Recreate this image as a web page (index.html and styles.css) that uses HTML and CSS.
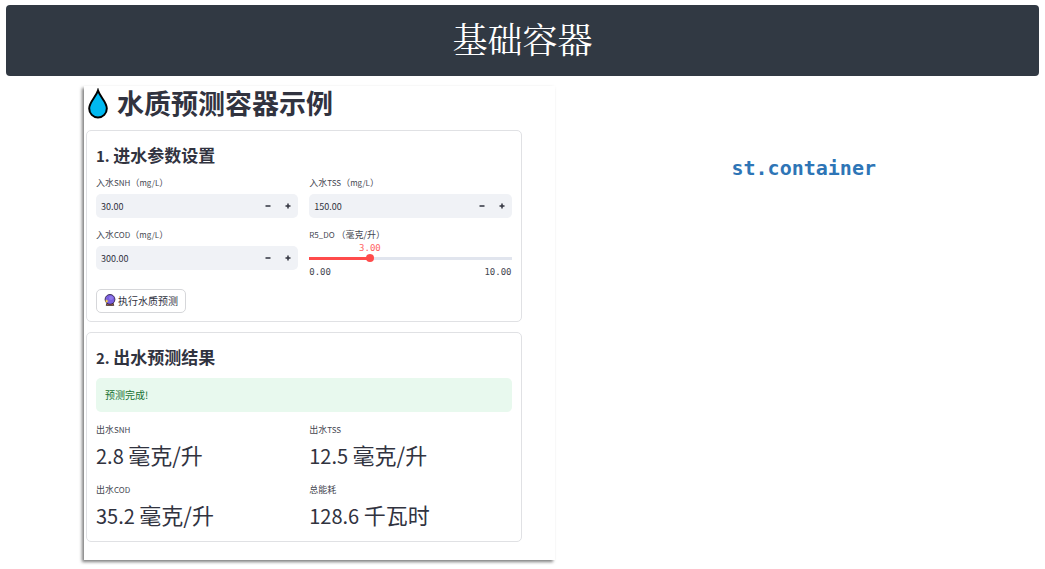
FILE: index.html
```html
<!DOCTYPE html>
<html lang="zh-CN">
<head>
<meta charset="utf-8">
<meta name="viewport" content="width=device-width, initial-scale=1">
<title>基础容器</title>
<link rel="stylesheet" href="styles.css">
</head>
<body>
<header class="banner"><h1 class="banner-title">基础容器</h1></header>
<main class="content">
  <section class="sheet">
    <h2 class="app-title">
      <svg class="drop" viewBox="0 0 20 30" aria-hidden="true"><path d="M10 1.500C8 8 1.200 13 1.200 19.500a8.800 9 0 0 0 17.600 0C18.800 13 12 8 10 1.500Z" fill="#00b9f1" stroke="#000" stroke-width="2"/></svg>
      <span>水质预测容器示例</span>
    </h2>

    <form class="card">
      <h3 class="card-title"><span class="card-index">1. </span>进水参数设置</h3>
      <div class="fields">
        <div class="field">
          <label class="label" for="snh">入水<span class="latin">SNH</span>（<span class="latin">mg/L</span>）</label>
          <div class="stepper">
            <input class="number" id="snh" type="number" step="0.01" value="30.00">
            <button class="step" type="button" aria-label="减少"><svg class="step-icon" viewBox="0 0 8 8"><path d="M1.500 4h5"/></svg></button>
            <button class="step" type="button" aria-label="增加"><svg class="step-icon" viewBox="0 0 8 8"><path d="M1.500 4h5M4 1.500v5"/></svg></button>
          </div>
        </div>
        <div class="field">
          <label class="label" for="tss">入水<span class="latin">TSS</span>（<span class="latin">mg/L</span>）</label>
          <div class="stepper">
            <input class="number" id="tss" type="number" step="0.01" value="150.00">
            <button class="step" type="button" aria-label="减少"><svg class="step-icon" viewBox="0 0 8 8"><path d="M1.500 4h5"/></svg></button>
            <button class="step" type="button" aria-label="增加"><svg class="step-icon" viewBox="0 0 8 8"><path d="M1.500 4h5M4 1.500v5"/></svg></button>
          </div>
        </div>
        <div class="field">
          <label class="label" for="cod">入水<span class="latin">COD</span>（<span class="latin">mg/L</span>）</label>
          <div class="stepper">
            <input class="number" id="cod" type="number" step="0.01" value="300.00">
            <button class="step" type="button" aria-label="减少"><svg class="step-icon" viewBox="0 0 8 8"><path d="M1.500 4h5"/></svg></button>
            <button class="step" type="button" aria-label="增加"><svg class="step-icon" viewBox="0 0 8 8"><path d="M1.500 4h5M4 1.500v5"/></svg></button>
          </div>
        </div>
        <div class="field slider">
          <label class="label" for="do"><span class="latin">R5_DO </span>（毫克/升）</label>
          <output class="slider-value" for="do">3.00</output>
          <input class="range" id="do" type="range" min="0" max="10" step="0.01" value="3">
          <div class="slider-ends"><span>0.00</span><span>10.00</span></div>
        </div>
      </div>
      <button class="run" type="button">
        <svg class="ball" viewBox="0 0 12 12" aria-hidden="true"><path d="M3 8.800h6l.8 2.600H2.200Z" fill="#a8643c" stroke="#3a2a2e" stroke-width=".8"/><circle cx="6" cy="5.400" r="4.900" fill="#7b5fe0" stroke="#33264d" stroke-width=".9"/><circle cx="7" cy="4" r="2" fill="#8f7bea"/><path d="M2.700 5.200l.6 1.300 1.300.6-1.300.6-.6 1.300-.6-1.300L.8 7.100l1.300-.6Z" fill="#ffd83d"/></svg>
        <span>执行水质预测</span>
      </button>
    </form>

    <section class="card">
      <h3 class="card-title"><span class="card-index">2. </span>出水预测结果</h3>
      <p class="alert" role="status">预测完成!</p>
      <dl class="metrics">
        <div class="metric"><dt class="label">出水<span class="latin">SNH</span></dt><dd class="value"><span class="figure">2.8 </span>毫克/升</dd></div>
        <div class="metric"><dt class="label">出水<span class="latin">TSS</span></dt><dd class="value"><span class="figure">12.5 </span>毫克/升</dd></div>
        <div class="metric"><dt class="label">出水<span class="latin">COD</span></dt><dd class="value"><span class="figure">35.2 </span>毫克/升</dd></div>
        <div class="metric"><dt class="label">总能耗</dt><dd class="value"><span class="figure">128.6 </span>千瓦时</dd></div>
      </dl>
    </section>
  </section>
  <aside class="note"><code class="api">st.container</code></aside>
</main>
</body>
</html>
```
FILE: styles.css
```css
* { box-sizing: border-box; }

body {
  margin: 0;
  padding: 5px 6px;
  background: #fff;
  color: #31333f;
  font-family: "Noto Sans CJK SC", sans-serif;
}

h1, h2, h3, p, dl, dd { margin: 0; }

button, input { font: inherit; color: inherit; }

.banner {
  padding: 10px 12px 14px;
  border-radius: 4px;
  background: #313943;
  text-align: center;
}

.banner-title {
  color: #fff;
  font-family: KaiTi, STKaiti, "Noto Serif CJK SC", "Noto Sans CJK SC", serif;
  font-size: 35px;
  font-weight: 400;
  line-height: 47px;
}

.content {
  display: grid;
  grid-template-columns: 1fr 1fr;
  align-items: start;
  gap: 14px;
  padding: 10px 0 0 78px;
}

.sheet {
  display: flex;
  flex-direction: column;
  gap: 10px;
  padding: 0 33px 18px 2px;
  background: #fff;
  box-shadow: -2px 2px 3px rgba(0, 0, 0, 0.5);
}

.app-title {
  display: flex;
  align-items: center;
  gap: 9px;
  padding-left: 2px;
  font-size: 27px;
  font-weight: 700;
  line-height: 34px;
}

.drop { width: 20px; height: 32px; }

.app-title { padding-top: 2px; }

.app-title span { margin-top: -2px; }

.card {
  padding: 9px 9px 8px;
  border: 1px solid #e0e1e4;
  border-radius: 5px;
}

.card-title {
  margin-bottom: 5px;
  font-size: 17px;
  font-weight: 700;
  line-height: 30px;
}

.card-index, .latin, .figure { line-height: 1; }

.card-index { font-size: 15px; }

.fields, .metrics {
  display: grid;
  grid-template-columns: 1fr 1fr;
  gap: 9px 11px;
}

.label {
  display: block;
  color: #444650;
  font-size: 9px;
  line-height: 16px;
}

.latin { font-size: 8px; }

.stepper {
  display: flex;
  height: 24px;
  margin-top: 3px;
  border-radius: 5px;
  background: #f0f2f6;
}

.number {
  flex: 1;
  min-width: 0;
  padding: 0 5px;
  border: 0;
  background: none;
  font-size: 9px;
  appearance: textfield;
}

.number::-webkit-inner-spin-button { display: none; }

.step {
  display: grid;
  place-items: center;
  width: 20px;
  padding: 0;
  border: 0;
  background: none;
}

.step-icon {
  width: 8px;
  height: 8px;
  fill: none;
  stroke: #31333f;
  stroke-width: 1.5;
}

.slider {
  display: flex;
  flex-direction: column;
}

.slider-value, .slider-ends {
  font-family: "DejaVu Sans Mono", monospace;
  font-size: 9px;
}

.slider-value {
  width: 60%;
  color: #ff6464;
  line-height: 10px;
  text-align: center;
}

.range {
  height: 10px;
  margin: 0 -4px;
  appearance: none;
  background: none;
}

.range::-webkit-slider-runnable-track {
  height: 3px;
  background: linear-gradient(to right, #ff4b4b 30%, #e1e5ee 30%) center / calc(100% - 8px) 100% no-repeat;
}

.range::-webkit-slider-thumb {
  width: 8px;
  height: 8px;
  margin-top: -3px;
  border-radius: 50%;
  appearance: none;
  background: #ff4b4b;
}

.slider-ends {
  display: flex;
  justify-content: space-between;
  margin-top: 3px;
  color: #444650;
  line-height: 12px;
}

.run {
  display: flex;
  align-items: center;
  gap: 2px;
  height: 24px;
  margin-top: 11px;
  padding: 0 7px 2px;
  border: 1px solid #d6d7da;
  border-radius: 5px;
  background: #fff;
  font-size: 10px;
}

.ball { width: 12px; height: 12px; }

.alert {
  margin-top: 6px;
  padding: 9px;
  border-radius: 5px;
  background: #e8f9ee;
  color: #177233;
  font-size: 10px;
  line-height: 16px;
}

.metrics {
  margin: 10px 0 4px;
  row-gap: 13px;
}

.value {
  margin-top: 1px;
  font-size: 22px;
  line-height: 30px;
}

.figure { font-size: 20px; }

.note {
  padding-top: 68px;
  text-align: center;
}

.api {
  color: #2e75b6;
  font-family: Consolas, "DejaVu Sans Mono", monospace;
  font-size: 20px;
  font-weight: 700;
  line-height: 28px;
}
```
